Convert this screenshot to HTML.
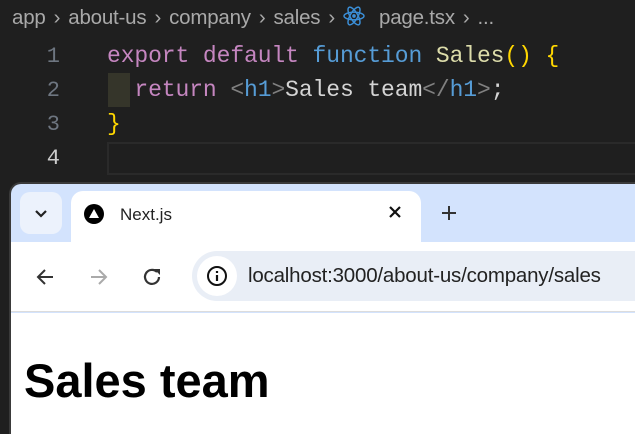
<!DOCTYPE html>
<html><head><meta charset="utf-8"><style>
*{margin:0;padding:0;box-sizing:border-box}
html,body{width:635px;height:434px;overflow:hidden}
body{background:#1f1f1f;position:relative;font-family:"Liberation Sans",sans-serif}
.bc{position:absolute;left:12px;top:6px;font-size:20.5px;color:#a9a9a9;white-space:nowrap;letter-spacing:-0.2px}
.bc .sep{color:#a9a9a9;margin:0 8px}
.ln{position:absolute;left:0;width:60px;text-align:right;font-family:"Liberation Mono",monospace;font-size:22px;color:#6e7681}
.code{position:absolute;left:107px;font-family:"Liberation Mono",monospace;font-size:23px;white-space:pre;color:#d4d4d4;letter-spacing:-0.1px}
.k{color:#c586c0}.f{color:#569cd6}.n{color:#dcdcaa}.y{color:#ffd700}.t{color:#569cd6}.g{color:#808080}
.win{position:absolute;left:9px;top:182px;width:626px;height:252px;background:#d3e3fd;border:2px solid #3a3a3a;border-right:none;border-bottom:none;border-radius:12px 0 0 0;overflow:hidden}
.tab{position:absolute;left:60px;top:7px;width:350px;height:60px;background:#fff;border-radius:12px 12px 0 0}
.drop{position:absolute;left:9px;top:8px;width:42px;height:42px;background:#ecf2fc;border-radius:10px}
.tool{position:absolute;left:0;top:58px;width:626px;height:70px;background:#fff;border-bottom:1px solid #dcdcdc}
.addr{position:absolute;left:181px;top:9px;width:470px;height:50px;background:#e9eef6;border-radius:25px}
.content{position:absolute;left:0;top:129px;width:626px;height:123px;background:#fff}
</style></head><body>
<div class="bc">app<span class="sep">&#x203A;</span>about-us<span class="sep">&#x203A;</span>company<span class="sep">&#x203A;</span>sales<span class="sep">&#x203A;</span><svg width="22" height="20" viewBox="0 0 24 22" style="vertical-align:-2px;margin-right:14px"><g fill="none" stroke="#3b8fd8" stroke-width="1.6"><ellipse cx="12" cy="11" rx="11" ry="4.2"/><ellipse cx="12" cy="11" rx="11" ry="4.2" transform="rotate(60 12 11)"/><ellipse cx="12" cy="11" rx="11" ry="4.2" transform="rotate(120 12 11)"/></g><circle cx="12" cy="11" r="2" fill="#3b8fd8"/></svg>page.tsx<span class="sep">&#x203A;</span>...</div>
<div class="ln" style="top:44px">1</div>
<div class="ln" style="top:78px">2</div>
<div class="ln" style="top:112px">3</div>
<div class="ln" style="top:146px;color:#ccc">4</div>
<div class="code" style="top:43px"><span class="k">export default</span> <span class="f">function</span> <span class="n">Sales</span><span class="y">()</span> <span class="y">{</span></div>
<div style="position:absolute;left:108px;top:73px;width:22px;height:34px;background:#35352a"></div>
<div class="code" style="top:77px">  <span class="k">return</span> <span class="g">&lt;</span><span class="t">h1</span><span class="g">&gt;</span>Sales team<span class="g">&lt;/</span><span class="t">h1</span><span class="g">&gt;</span>;</div>
<div class="code" style="top:111px"><span class="y">}</span></div>
<div style="position:absolute;left:107px;top:142px;width:528px;height:33px;border:2px solid #2a2a2a;border-right:none"></div>
<div class="win">
 <div class="drop"><svg width="42" height="42"><path d="M16 19l5 5 5-5" fill="none" stroke="#222" stroke-width="2.2"/></svg></div>
 <div class="tab">
  <svg style="position:absolute;left:12px;top:12px" width="22" height="22"><circle cx="11" cy="11" r="10" fill="#000"/><path d="M11 6l5 9H6z" fill="#fff"/></svg>
  <span style="position:absolute;left:49px;top:14px;font-size:17px;color:#222">Next.js</span>
  <svg style="position:absolute;left:317px;top:14px" width="14" height="14"><path d="M2 2l10 10M12 2L2 12" stroke="#111" stroke-width="2.2"/></svg>
 </div>
 <svg style="position:absolute;left:430px;top:21px" width="16" height="16"><path d="M8 1v14M1 8h14" stroke="#333" stroke-width="2"/></svg>
 <div class="tool">
  <svg style="position:absolute;left:24px;top:26px" width="20" height="18"><path d="M18 9H3M10 2L3 9l7 7" fill="none" stroke="#333" stroke-width="2"/></svg>
  <svg style="position:absolute;left:78px;top:26px" width="20" height="18"><path d="M2 9h15M10 2l7 7-7 7" fill="none" stroke="#aaa" stroke-width="2"/></svg>
  <svg style="position:absolute;left:131px;top:24px" width="22" height="22"><path d="M17 11a7 7 0 1 1-2-5" fill="none" stroke="#333" stroke-width="2.2"/><path d="M12 3h6v6z" fill="#333"/></svg>
  <div class="addr">
   <div style="position:absolute;left:5px;top:5px;width:40px;height:40px;border-radius:20px;background:#fff"></div>
   <svg style="position:absolute;left:14px;top:14px" width="22" height="22"><circle cx="11" cy="11" r="9" fill="none" stroke="#111" stroke-width="2"/><path d="M11 10v6M11 6v2" stroke="#111" stroke-width="2.2"/></svg>
   <span style="position:absolute;left:56px;top:13px;font-size:20.5px;color:#222;white-space:nowrap;letter-spacing:-0.2px">localhost:3000/about-us/company/sales</span>
  </div>
 </div>
 <div class="content">
  <div style="position:absolute;left:13px;top:40px;font-size:47px;font-weight:bold;color:#000">Sales team</div>
 </div>
</div>
</body></html>
